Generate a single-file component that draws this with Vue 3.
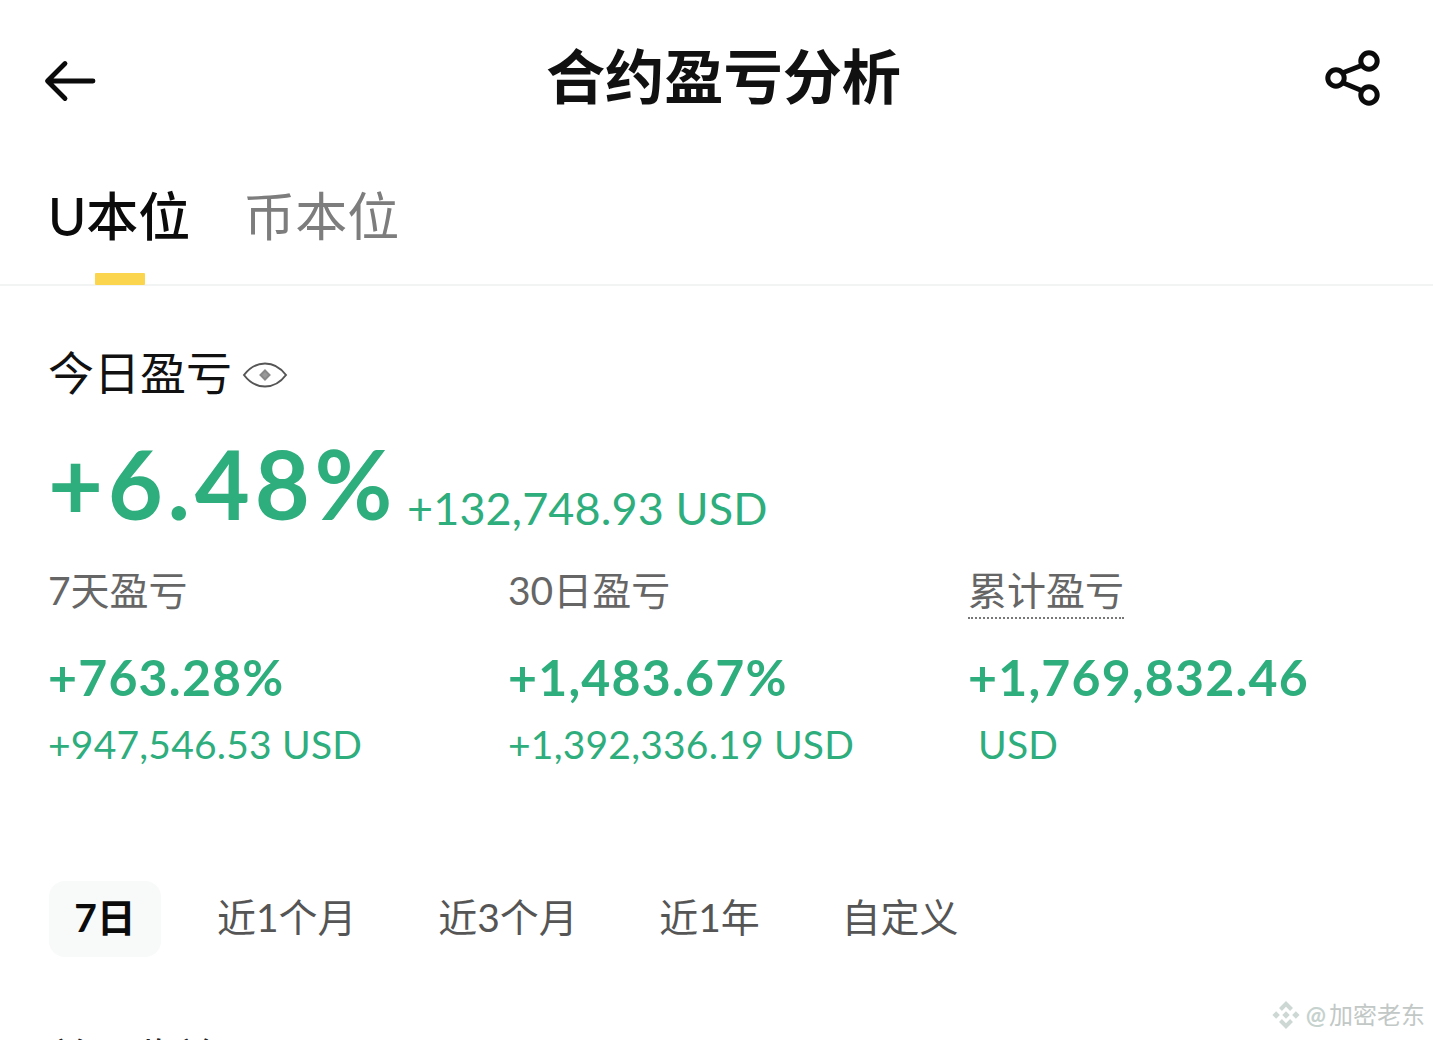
<script setup>
const stats = [
  { label: '7天盈亏', pct: '+763.28%', usd: '+947,546.53 USD' },
  { label: '30日盈亏', pct: '+1,483.67%', usd: '+1,392,336.19 USD' },
  { label: '累计盈亏', pct: '+1,769,832.46', usd: 'USD', dotted: true, indent: true },
]
const ranges = ['近1个月', '近3个月', '近1年', '自定义']
</script>

<template>
  <div class="page">
    <header class="nav">
      <svg class="back" width="52" height="44" viewBox="0 0 52 44" fill="none" stroke="#0b0b0b" stroke-width="4.800" stroke-linecap="round" stroke-linejoin="round">
        <path d="M4 22H49M21 4.500 3.500 22 21 39.500" />
      </svg>
      <h1>合约盈亏分析</h1>
      <svg class="share" width="56" height="56" viewBox="0 0 56 56" fill="none" stroke="#0b0b0b" stroke-width="5">
        <circle cx="11" cy="28" r="8.200" />
        <circle cx="44" cy="11" r="8.200" />
        <circle cx="44" cy="45" r="8.200" />
        <path d="M18.500 22.500 36.500 15.500M18.500 33 36.500 40.500" />
      </svg>
    </header>

    <nav class="tabs">
      <div class="tab active">U本位<i></i></div>
      <div class="tab">币本位</div>
    </nav>

    <section class="today">
      <div class="title">
        <span>今日盈亏</span>
        <svg width="46" height="30" viewBox="0 0 46 30" fill="none" stroke="#555" stroke-width="2">
          <path d="M2 15C8 7 15 3.500 23 3.500S38 7 44 15C38 23 31 26.500 23 26.500S8 23 2 15Z" />
          <path d="M23 10.500 27.500 15 23 19.500 18.500 15Z" fill="#999" stroke="#888" />
        </svg>
      </div>
      <div class="big">
        <strong>+6.48%</strong>
        <span>+132,748.93 USD</span>
      </div>
    </section>

    <section class="stats">
      <div v-for="s in stats" :key="s.label" class="stat">
        <div class="label" :class="{ dotted: s.dotted }">{{ s.label }}</div>
        <div class="pct">{{ s.pct }}</div>
        <div class="usd" :class="{ indent: s.indent }">{{ s.usd }}</div>
      </div>
    </section>

    <section class="ranges">
      <div class="range on">7日</div>
      <div v-for="r in ranges" :key="r" class="range">{{ r }}</div>
    </section>

    <div class="clipped">单日收益</div>

    <div class="mark">
      <svg width="30" height="30" viewBox="0 0 28 28" fill="#cdd8d4">
        <path d="M14 1 20.500 7.500 17.800 10.200 14 6.400 10.200 10.200 7.500 7.500ZM4.800 10.500 8.300 14 4.800 17.500 1.300 14ZM23.200 10.500 26.700 14 23.200 17.500 19.700 14ZM14 10.500 17.500 14 14 17.500 10.500 14ZM7.500 20.500 10.200 17.800 14 21.600 17.800 17.800 20.500 20.500 14 27Z" />
      </svg>
      <b>@</b>
      <span>加密老东</span>
    </div>
  </div>
</template>

<style>
html, body { margin: 0; background: #fff; }
</style>

<style scoped>
.page {
  position: relative;
  width: 1433px;
  height: 1040px;
  overflow: hidden;
  background: #fff;
  font-family: Lato, "Noto Sans CJK SC", sans-serif;
  color: #0b0b0b;
}
.nav {
  height: 151px;
  box-sizing: border-box;
  padding: 0 52px 0 44px;
  display: flex;
  align-items: center;
  justify-content: space-between;
}
.back { margin-top: 10px; }
.share { margin-top: 4px; }
.nav h1 {
  margin: 3px 0 0 26px;
  font-size: 59.2px;
  line-height: 1;
  font-weight: 700;
  color: #111;
}
.tabs {
  height: 135px;
  box-sizing: border-box;
  padding-left: 48px;
  display: flex;
  gap: 53px;
  border-bottom: 2px solid #f2f3f3;
}
.tab {
  position: relative;
  margin-top: 33px;
  font-size: 52px;
  line-height: 64px;
  font-weight: 400;
  color: #7d7d7d;
}
.tab.active { font-weight: 500; color: #0b0b0b; }
.tab i {
  position: absolute;
  left: 47px;
  top: 89px;
  width: 50px;
  height: 12px;
  background: #fcd54e;
  border-radius: 1px;
}
.today { padding: 59px 48px 0; }
.title {
  display: flex;
  align-items: center;
  gap: 10px;
  font-size: 46px;
  line-height: 56px;
  color: #111;
}
.title svg { margin-top: 4px; }
.big {
  margin-top: 26px;
  display: flex;
  align-items: flex-end;
  gap: 10px;
  color: #2ead7d;
  height: 112px;
}
.big strong { font-size: 95px; line-height: 112px; font-weight: 700; letter-spacing: 4.700px; }
.big span { font-size: 45px; line-height: 50px; font-weight: 400; letter-spacing: 0.1px; margin-bottom: 6px; }
.stats {
  margin-top: 27px;
  padding-left: 48px;
  display: grid;
  grid-template-columns: 460px 460px 1fr;
}
.label {
  font-size: 39px;
  line-height: 48px;
  color: #666;
  width: max-content;
}
.label.dotted { border-bottom: 2px dotted #777; padding-bottom: 3px; margin-bottom: -5px; }
.pct {
  margin-top: 33px;
  font-size: 50px;
  line-height: 60px;
  font-weight: 700;
  color: #2ead7d;
  letter-spacing: 1.2px;
}
.usd {
  margin-top: 15px;
  font-size: 39px;
  line-height: 44px;
  color: #2ead7d;
  letter-spacing: 0.2px;
}
.usd.indent { padding-left: 10px; }
.ranges {
  margin-top: 115px;
  padding-left: 49px;
  display: flex;
  align-items: center;
}
.range {
  font-size: 39px;
  line-height: 72px;
  padding-bottom: 4px;
  color: #555;
  margin-right: 81.5px;
}
.range.on {
  width: 112px;
  margin-right: 56px;
  text-align: center;
  border-radius: 16px;
  background: #f8f9f9;
  color: #0b0b0b;
  font-weight: 700;
}
.clipped {
  position: absolute;
  left: 49px;
  top: 1033px;
  font-size: 42px;
  line-height: 50px;
  color: #222;
}
.mark {
  position: absolute;
  right: 8px;
  top: 1000px;
  display: flex;
  align-items: center;
  font-size: 24px;
  line-height: 28px;
  color: #c2c8c6;
}
.mark svg { margin-right: 5px; }
.mark b { font-weight: 700; font-size: 24px; color: #c6d2ce; margin-right: 3px; }
</style>
